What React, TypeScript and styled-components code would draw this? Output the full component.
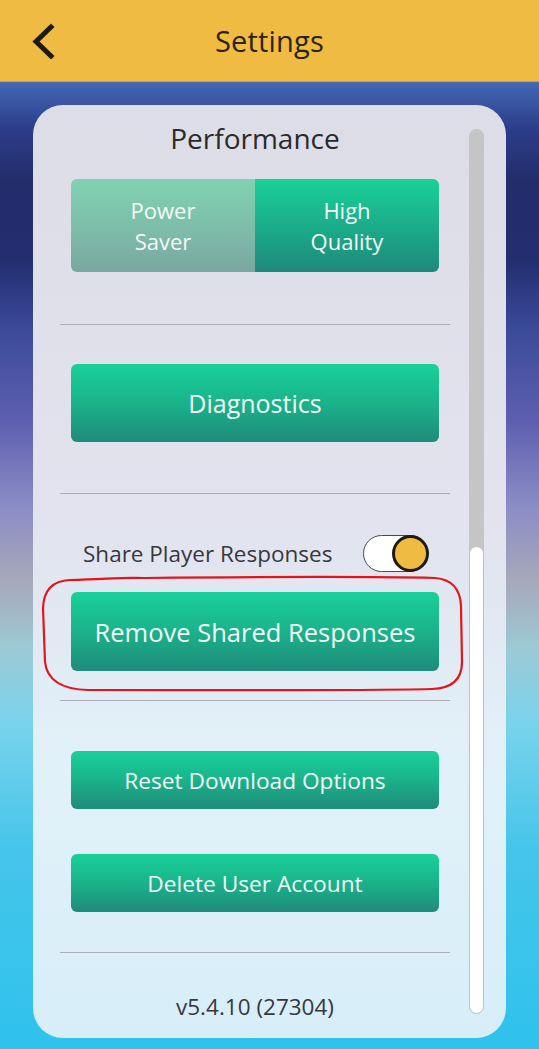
import React from "react";
import styled, { createGlobalStyle } from "styled-components";

const Global = createGlobalStyle`
  html, body { margin: 0; padding: 0; }
  body {
    width: 539px;
    height: 1049px;
    overflow: hidden;
    font-family: "Open Sans", "Noto Sans", sans-serif;
  }
  * { box-sizing: border-box; }
`;

const Screen = styled.div`
  width: 539px;
  height: 1049px;
  display: flex;
  flex-direction: column;
  background: linear-gradient(
    180deg,
    #4468b6 82px,
    #2b3c88 130px,
    #232d6c 180px,
    #232e70 260px,
    #3b4a9a 330px,
    #5e5eb0 420px,
    #8a8cc6 505px,
    #a7a8ba 580px,
    #9ccad6 650px,
    #78d3ec 725px,
    #46c5ea 850px,
    #2ec2ec 1049px
  );
`;

const Header = styled.header`
  height: 82px;
  flex: none;
  background: #efbb42;
  border-bottom: 1px solid #c7a24e;
  display: grid;
  grid-template-columns: 80px 1fr 80px;
  align-items: center;
`;

const BackButton = styled.button`
  border: 0;
  background: transparent;
  padding: 0 0 0 30px;
  height: 100%;
  display: flex;
  align-items: center;
  cursor: pointer;
`;

const Title = styled.h1`
  margin: 0;
  text-align: center;
  font-size: 29px;
  font-weight: 400;
  color: #2a2418;
  letter-spacing: 0.2px;
`;

const Card = styled.main`
  position: relative;
  margin: 23px 33px 0 33px;
  height: 933px;
  border-radius: 30px;
  padding: 15px 56px 0 27px;
  background: linear-gradient(180deg, #dddde7 0%, #e2e3ee 45%, #e1f1f9 70%, #d7eef8 100%);
  display: flex;
  flex-direction: column;
`;

const SectionTitle = styled.h2`
  margin: 0;
  text-align: center;
  font-size: 28px;
  line-height: 36px;
  font-weight: 400;
  color: #2a2a2a;
`;

const Segmented = styled.div`
  margin: 23px 11px 0 11px;
  height: 93px;
  border-radius: 6px;
  overflow: hidden;
  display: grid;
  grid-template-columns: 1fr 1fr;
`;

const Segment = styled.button<{ $active?: boolean }>`
  border: 0;
  padding: 0;
  font-family: inherit;
  font-size: 22px;
  line-height: 31px;
  color: #f4faf7;
  background: ${(p) =>
    p.$active
      ? "linear-gradient(180deg, #19d198 0%, #1c9f84 70%, #1f897b 100%)"
      : "linear-gradient(180deg, #80d2b2 0%, #7ebaa8 60%, #7aa7a1 100%)"};
  display: flex;
  align-items: center;
  justify-content: center;
  text-align: center;
`;

const Divider = styled.hr<{ $mt: number }>`
  margin: ${(p) => p.$mt}px 0 0 0;
  border: 0;
  height: 1px;
  background: #aeaeb8;
  flex: none;
`;

const ActionButton = styled.button<{ $mt: number; $h: number; $fs: number }>`
  margin: ${(p) => p.$mt}px 11px 0 11px;
  height: ${(p) => p.$h}px;
  flex: none;
  border: 0;
  border-radius: 6px;
  font-family: inherit;
  font-size: ${(p) => p.$fs}px;
  color: #f2faf6;
  background: linear-gradient(180deg, #19d198 0%, #1ab68c 45%, #1f8b7b 100%);
  display: flex;
  align-items: center;
  justify-content: center;
  cursor: pointer;
`;

const ToggleRow = styled.div`
  margin-top: 40px;
  height: 38px;
  padding: 0 22px 0 23px;
  display: flex;
  align-items: center;
  justify-content: space-between;
`;

const ToggleLabel = styled.span`
  font-size: 22.5px;
  color: #38383c;
`;

const Toggle = styled.div`
  width: 65px;
  height: 37px;
  border-radius: 19px;
  background: #ffffff;
  border: 1.5px solid #4a4a4a;
  display: flex;
  justify-content: flex-end;
  align-items: center;
`;

const Knob = styled.span`
  width: 37px;
  height: 37px;
  margin-right: -1.5px;
  border-radius: 50%;
  background: #efbb42;
  border: 3px solid #1e1a14;
`;

const Highlighted = styled.div`
  position: relative;
  display: flex;
  flex-direction: column;
`;

const Annotation = styled.svg`
  position: absolute;
  left: -20px;
  top: 2px;
  width: 426px;
  height: 120px;
  pointer-events: none;
  overflow: visible;
`;

const Version = styled.p`
  margin: 40px 0 0 0;
  text-align: center;
  font-size: 22.5px;
  line-height: 28px;
  color: #38383c;
`;

const ScrollTrack = styled.div`
  position: absolute;
  right: 22px;
  top: 24px;
  bottom: 24px;
  width: 15px;
  border-radius: 8px;
  background: #c5c5c8;
  display: flex;
  flex-direction: column;
  justify-content: flex-end;
`;

const ScrollThumb = styled.div`
  height: 468px;
  border-radius: 8px;
  background: #ffffff;
  border: 1px solid #c0c0c4;
`;

export default function App() {
  return (
    <>
      <Global />
      <Screen>
        <Header>
          <BackButton aria-label="Back">
            <svg width="26" height="36" viewBox="0 0 26 36">
              <polyline
                points="21,4 6,18.5 21,33"
                fill="none"
                stroke="#1e1a12"
                strokeWidth="5"
                strokeLinecap="square"
              />
            </svg>
          </BackButton>
          <Title>Settings</Title>
          <span />
        </Header>
        <Card>
          <SectionTitle>Performance</SectionTitle>
          <Segmented>
            <Segment>
              Power
              <br />
              Saver
            </Segment>
            <Segment $active>
              High
              <br />
              Quality
            </Segment>
          </Segmented>
          <Divider $mt={52} />
          <ActionButton $mt={39} $h={78} $fs={25}>
            Diagnostics
          </ActionButton>
          <Divider $mt={51} />
          <ToggleRow>
            <ToggleLabel>Share Player Responses</ToggleLabel>
            <Toggle>
              <Knob />
            </Toggle>
          </ToggleRow>
          <Highlighted>
            <ActionButton $mt={20} $h={79} $fs={25.5}>
              Remove Shared Responses
            </ActionButton>
            <Annotation viewBox="0 0 426 120">
              <path
                d="M30 6 C70 5 80 3 105 4 C200 3 320 2 395 4 Q420 6 421 32 L422 88 Q422 114 392 115 C300 117 150 116 48 116 Q8 115 5 88 L3 34 Q4 7 30 6 Z"
                fill="none"
                stroke="#e5141a"
                strokeWidth="2.2"
              />
            </Annotation>
          </Highlighted>
          <Divider $mt={29} />
          <ActionButton $mt={50} $h={58} $fs={22.7}>
            Reset Download Options
          </ActionButton>
          <ActionButton $mt={45} $h={58} $fs={22.7}>
            Delete User Account
          </ActionButton>
          <Divider $mt={40} />
          <Version>v5.4.10 (27304)</Version>
          <ScrollTrack>
            <ScrollThumb />
          </ScrollTrack>
        </Card>
      </Screen>
    </>
  );
}
